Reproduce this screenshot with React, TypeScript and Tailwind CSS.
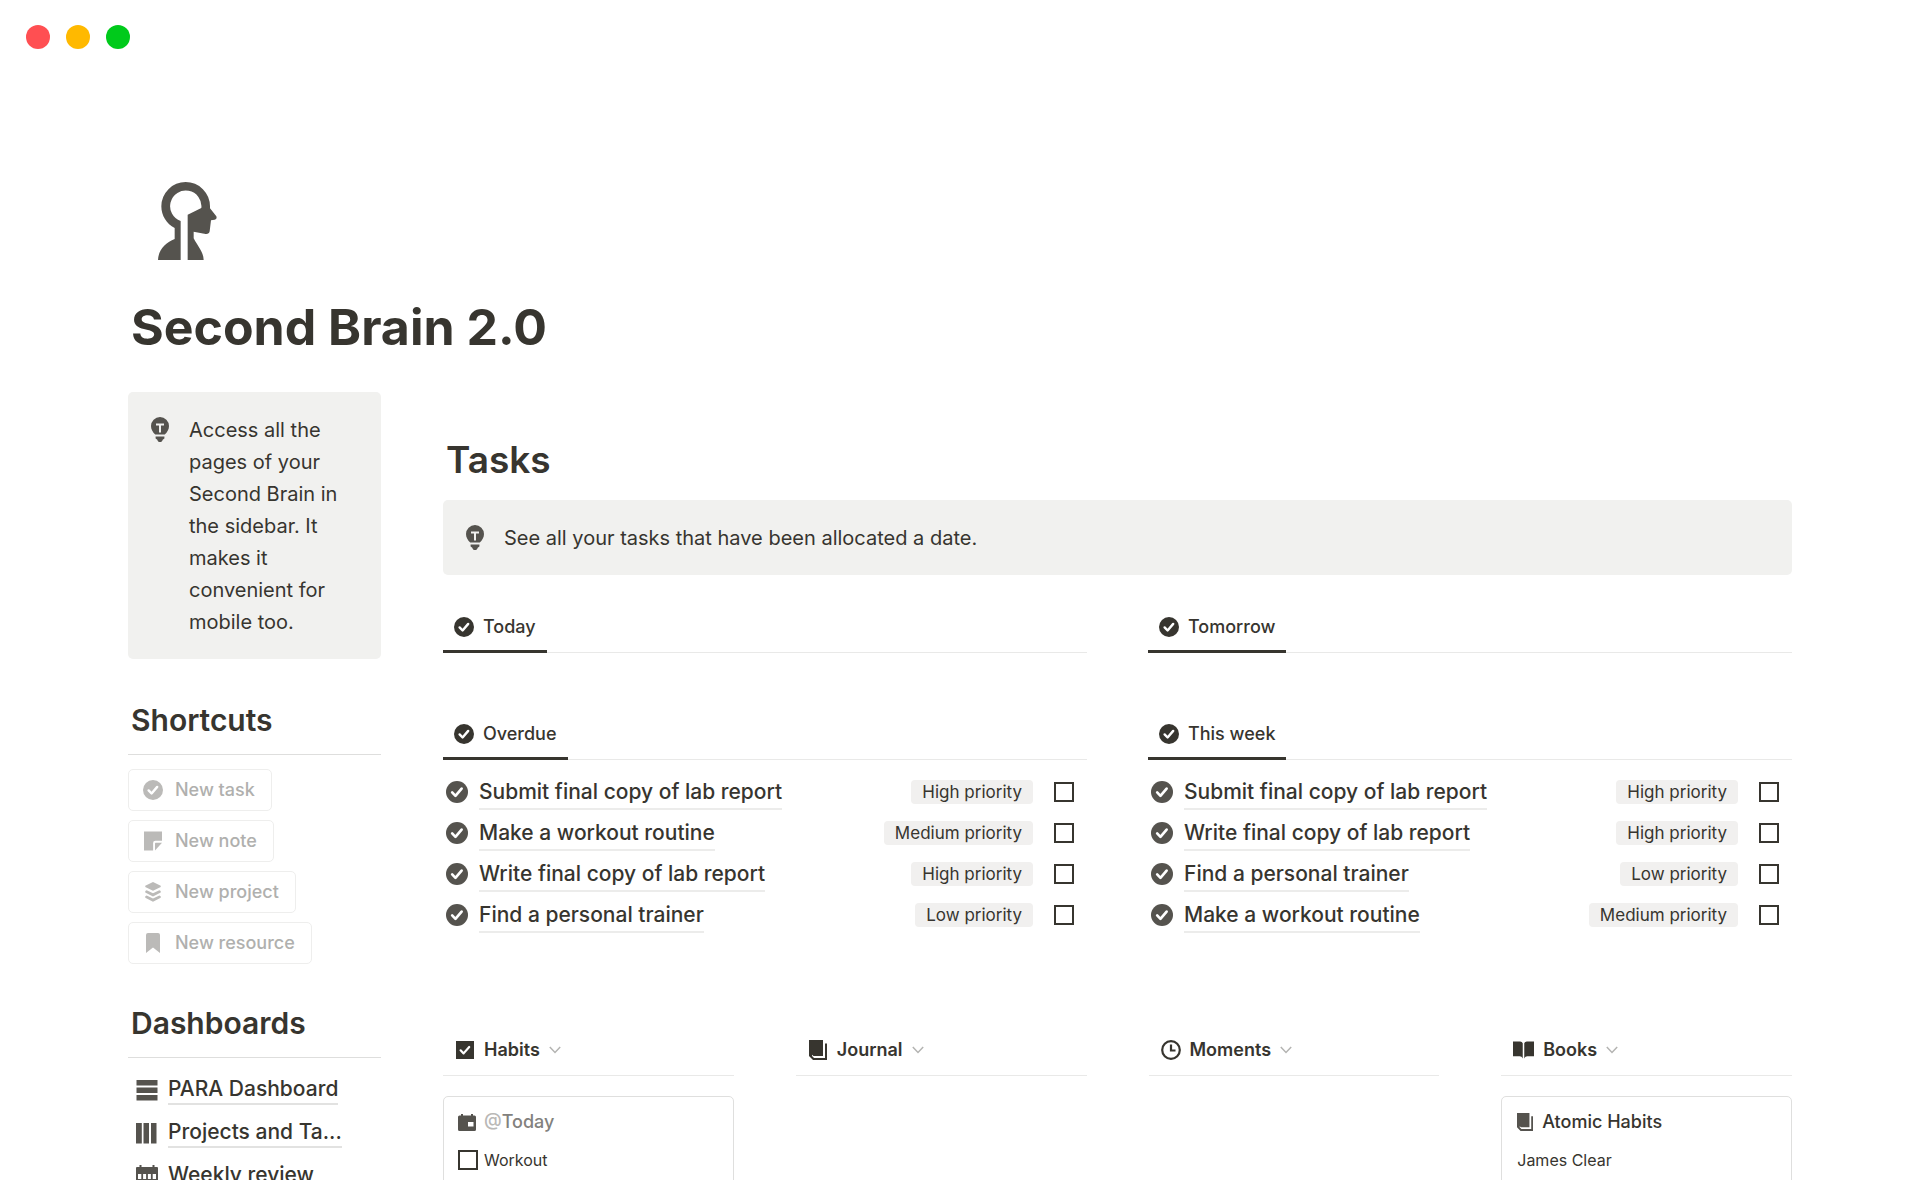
import React from 'react';

type IconProps = { className?: string };

const CheckCircle = ({ className }: IconProps) => (
  <svg viewBox="0 0 20 20" className={className} fill="currentColor" aria-hidden="true">
    <circle cx="10" cy="10" r="10" />
    <path d="M5.6 10.4l3 3.1 5.6-6.6" fill="none" stroke="#fff" strokeWidth="2.4" strokeLinecap="round" strokeLinejoin="round" />
  </svg>
);

const CheckSquare = ({ className }: IconProps) => (
  <svg viewBox="0 0 20 20" className={className} fill="currentColor" aria-hidden="true">
    <path d="M1 1h18v18H1z" />
    <path d="M5.6 10.3l3 3.1 5.6-6.4" fill="none" stroke="#fff" strokeWidth="2.2" strokeLinecap="round" strokeLinejoin="round" />
  </svg>
);

const Head = ({ className }: IconProps) => (
  <svg viewBox="54 36 177 234" className={className} fill="currentColor" aria-hidden="true">
    <path d="M54 270C55 238 78 217 104 207V174C80 162 64 137 64 109A73 73 0 0 1 210 109V115L229 139Q232 147 224 149L213 151L209 184Q207 193 197 192L161 185V205C175 232 190 245 191 270H143V134L184 114A47 47 0 1 0 122 153V270Z" />
  </svg>
);

const Bulb = ({ className }: IconProps) => (
  <svg viewBox="0 0 18 25" className={className} aria-hidden="true">
    <path fill="currentColor" d="M9 0a9 9 0 0 1 9 9c0 3.4-1.7 6-4.2 8.6H4.2C1.7 15 0 12.400 0 9a9 9 0 0 1 9-9zM4.600 19.500h8.800v1.900l-1.700 1.300c-.4 1.500-1.200 2.300-2.700 2.300s-2.300-.8-2.700-2.300l-1.700-1.300z" />
    <path fill="none" stroke="#f1f1ef" strokeWidth="2" d="M5 7.500h8M9 7.500v8" />
  </svg>
);

const Note = ({ className }: IconProps) => (
  <svg viewBox="0 0 20 20" className={className} fill="currentColor" aria-hidden="true">
    <path d="M1 .5h18v9.300h-6.600a2.300 2.300 0 0 0-2.300 2.300v7.400H1z" />
    <path d="M12 19.500v-6.700c0-.6.400-1 1-1h6z" />
  </svg>
);

const Layers = ({ className }: IconProps) => (
  <svg viewBox="0 0 20 22" className={className} fill="currentColor" aria-hidden="true">
    <path d="M10 0l8.500 4.200v1.200L10 9.600 1.500 5.400V4.200z" />
    <path d="M3 9l7 3.300L17 9l1.500 1v1.600L10 15.900l-8.500-4.300V10z" />
    <path d="M3 14.800l7 3.400 7-3.400 1.500 1v1.600L10 21.700l-8.500-4.300v-1.600z" />
  </svg>
);

const Bookmark = ({ className }: IconProps) => (
  <svg viewBox="0 0 20 20" className={className} fill="currentColor" aria-hidden="true">
    <path d="M5 0h10a2 2 0 0 1 2 2v18l-7-5.600L3 20V2a2 2 0 0 1 2-2z" />
  </svg>
);

const Rows = ({ className }: IconProps) => (
  <svg viewBox="0 0 22 22" className={className} fill="currentColor" aria-hidden="true">
    <path d="M.5 1h21v5.500H.5zM.5 8.500h21V14H.5zM.5 16h21v5.500H.5z" />
  </svg>
);

const Columns = ({ className }: IconProps) => (
  <svg viewBox="0 0 22 22" className={className} fill="currentColor" aria-hidden="true">
    <path d="M0 1h5.800v20.500H0zM7.500 1h5.500v20.500H7.500zM15 1h5.500v20.500H15z" />
  </svg>
);

const CalendarGrid = ({ className }: IconProps) => (
  <svg viewBox="0 0 22 22" className={className} fill="currentColor" aria-hidden="true">
    <path fillRule="evenodd" d="M3.500 0h2v2h11V0h2v2H21a1 1 0 0 1 1 1v19H0V3a1 1 0 0 1 1-1h2.500zM2 9v5h3.300V9zM7.100 9v5h3V9zM11.900 9v5h3V9zM16.700 9v5H20V9zM2 16v4h3.300v-4zM7.100 16v4h3v-4zM11.900 16v4h3v-4z" />
  </svg>
);

const CalendarDay = ({ className }: IconProps) => (
  <svg viewBox="0 0 18 17" className={className} fill="currentColor" aria-hidden="true">
    <path fillRule="evenodd" d="M3 0h2v1.500h8V0h2v1.500h1.500A1.500 1.500 0 0 1 18 3v12.500a1.500 1.500 0 0 1-1.500 1.500h-15A1.500 1.500 0 0 1 0 15.500V3a1.500 1.500 0 0 1 1.500-1.500H3zM10 8v4.500h5.500V8z" />
  </svg>
);

const Journal = ({ className }: IconProps) => (
  <svg viewBox="0 0 18 20" className={className} fill="currentColor" aria-hidden="true">
    <path d="M0 0h14v16H4.500L3 14.800V16l2 1.900h11V3.500h2V20H4L0 16z" />
  </svg>
);

const Clock = ({ className }: IconProps) => (
  <svg viewBox="0 0 20 20" className={className} fill="none" stroke="currentColor" strokeWidth="2.200" aria-hidden="true">
    <circle cx="10" cy="10" r="8.800" />
    <path d="M10 4.500v6h4.500" />
  </svg>
);

const OpenBook = ({ className }: IconProps) => (
  <svg viewBox="0 0 22 18" className={className} fill="currentColor" aria-hidden="true">
    <path d="M0 0h7.500a3 3 0 0 1 2.700 2v16c-.8-1.600-1.700-2.500-3.200-2.500H0zM22 0h-7.500a3 3 0 0 0-2.700 2v16c.8-1.600 1.700-2.500 3.200-2.500h7z" />
  </svg>
);

const Chevron = ({ className }: IconProps) => (
  <svg viewBox="0 0 12 8" className={className} fill="none" stroke="currentColor" strokeWidth="1.500" aria-hidden="true">
    <path d="M.8 1L6 6.500 11.200 1" />
  </svg>
);

const shortcuts = [
  { label: 'New task', Icon: CheckCircle },
  { label: 'New note', Icon: Note },
  { label: 'New project', Icon: Layers },
  { label: 'New resource', Icon: Bookmark },
];

const dashboards = [
  { label: 'PARA Dashboard', Icon: Rows },
  { label: 'Projects and Ta...', Icon: Columns },
  { label: 'Weekly review', Icon: CalendarGrid },
];

const overdue = [
  { name: 'Submit final copy of lab report', priority: 'High priority' },
  { name: 'Make a workout routine', priority: 'Medium priority' },
  { name: 'Write final copy of lab report', priority: 'High priority' },
  { name: 'Find a personal trainer', priority: 'Low priority' },
];

const thisWeek = [
  { name: 'Submit final copy of lab report', priority: 'High priority' },
  { name: 'Write final copy of lab report', priority: 'High priority' },
  { name: 'Find a personal trainer', priority: 'Low priority' },
  { name: 'Make a workout routine', priority: 'Medium priority' },
];

const checkbox = 'size-5 shrink-0 appearance-none border-2 border-[#37352f] bg-white checked:bg-[#37352f]';

function Callout({ children }: { children: React.ReactNode }) {
  return (
    <div className="flex gap-5 rounded-[5px] bg-[#f1f1ef] px-[23px] pt-[22px] pb-[21px] text-xl/8">
      <Bulb className="mt-[3px] h-[25px] w-[18px] shrink-0 text-[#55534e]" />
      <p>{children}</p>
    </div>
  );
}

function TabBar({ label }: { label: string }) {
  return (
    <div className="flex h-[52px] border-b border-[#e9e9e8]">
      <button className="-mb-px flex items-center gap-[9px] border-b-3 border-[#37352f] px-[11px] pt-0.5 text-lg font-medium">
        <CheckCircle className="size-5" />
        {label}
      </button>
    </div>
  );
}

function TaskList({ label, tasks }: { label: string; tasks: { name: string; priority: string }[] }) {
  return (
    <section>
      <TabBar label={label} />
      <ul className="mt-[11px]">
        {tasks.map((task) => (
          <li key={task.name} className="flex h-[41px] items-center pr-[13px] pl-[3px]">
            <CheckCircle className="size-[22px] text-[#55534e]" />
            <a href="#" className="mt-0.5 ml-[11px] border-b-2 border-[#ececeb] text-[21px]/8 font-medium">
              {task.name}
            </a>
            <span className="ml-auto rounded-sm bg-[#f1f0ef] px-[11px] text-[17px]/6">{task.priority}</span>
            <input type="checkbox" aria-label={task.name} className={`ml-[21px] ${checkbox}`} />
          </li>
        ))}
      </ul>
    </section>
  );
}

interface BoardProps {
  label: string;
  icon: React.ReactNode;
  children?: React.ReactNode;
}

function Board({ label, icon, children }: BoardProps) {
  return (
    <section>
      <div className="flex h-[52px] items-center border-b border-[#e9e9e8] pl-3">
        <button className="flex items-center gap-[9px] text-lg font-semibold">
          {icon}
          {label}
          <Chevron className="h-2 w-3 text-[#b4b4b2]" />
        </button>
      </div>
      {children}
    </section>
  );
}

export default function App() {
  return (
    <div className="flex h-screen flex-col bg-white pb-5 font-['Inter','Liberation_Sans',sans-serif] text-[#37352f]">
      <div className="min-h-0 flex-1 overflow-hidden">
        {/* Window controls */}
        <div className="flex gap-4 px-[26px] pt-[25px]">
          <span className="size-6 rounded-full bg-[#ff4f52]" />
          <span className="size-6 rounded-full bg-[#ffb900]" />
          <span className="size-6 rounded-full bg-[#00ca1b]" />
        </div>

        {/* Page header */}
        <header className="px-32 pt-[133px]">
          <Head className="ml-[30px] h-[78px] w-[59px] text-[#55534e]" />
          <h1 className="mt-9 pl-[3px] text-[50px]/[62px] font-bold">Second Brain 2.0</h1>
        </header>

        <div className="flex gap-[62px] px-32 pt-[34px]">
          {/* Sidebar */}
          <aside className="w-[253px] shrink-0">
            <Callout>
              Access all the pages of your Second Brain in the sidebar. It makes it convenient for mobile too.
            </Callout>

            <h2 className="mt-[41px] pl-[3px] text-3xl/10 font-semibold">Shortcuts</h2>
            <hr className="mt-3.5 border-[#dededd]" />
            <div className="mt-3.5 flex flex-col items-start gap-[9px]">
              {shortcuts.map(({ label, Icon }) => (
                <button
                  key={label}
                  className="flex h-[42px] items-center gap-3 rounded-[5px] border border-[#eeeeed] pr-4 pl-3.5 text-lg font-medium text-[#b0b0ae]"
                >
                  <Icon className="size-5 text-[#bbbab8]" />
                  {label}
                </button>
              ))}
            </div>

            <h2 className="mt-[39px] pl-[3px] text-3xl/10 font-semibold">Dashboards</h2>
            <hr className="mt-3.5 border-[#dededd]" />
            <nav className="mt-2.5">
              {dashboards.map(({ label, Icon }) => (
                <div key={label} className="flex h-[43px] items-center gap-2.5 pl-2">
                  <Icon className="size-[22px] shrink-0 text-[#55534e]" />
                  <a href="#" className="border-b-2 border-[#e2e2e1] text-[21px]/7 font-medium whitespace-nowrap">
                    {label}
                  </a>
                </div>
              ))}
            </nav>
          </aside>

          {/* Main column */}
          <main className="min-w-0 flex-1 pt-11">
            <h2 className="pl-[3px] text-[37px]/12 font-semibold">Tasks</h2>
            <div className="mt-4">
              <Callout>See all your tasks that have been allocated a date.</Callout>
            </div>

            <div className="mt-[26px] grid grid-cols-2 gap-x-[61px] gap-y-[55px]">
              <TabBar label="Today" />
              <TabBar label="Tomorrow" />
              <TaskList label="Overdue" tasks={overdue} />
              <TaskList label="This week" tasks={thisWeek} />
            </div>

            <div className="mt-[89px] grid grid-cols-4 gap-x-[62px]">
              <Board label="Habits" icon={<CheckSquare className="size-5" />}>
                <div className="mt-5 h-60 rounded-[5px] border border-[#dfdfde] px-3.5 pt-[11px]">
                  <div className="flex items-center gap-2 text-lg/7 font-medium">
                    <CalendarDay className="h-[17px] w-[18px] text-[#55534e]" />
                    <span className="text-[#82817d]">
                      <span className="text-[#b9b8b6]">@</span>Today
                    </span>
                  </div>
                  <label className="mt-3 flex items-center gap-1.5 text-base/6">
                    <input type="checkbox" className={checkbox} />
                    Workout
                  </label>
                </div>
              </Board>
              <Board label="Journal" icon={<Journal className="size-5" />} />
              <Board label="Moments" icon={<Clock className="size-5" />} />
              <Board label="Books" icon={<OpenBook className="h-[18px] w-[21px]" />}>
                <div className="mt-5 h-60 rounded-[5px] border border-[#dfdfde] px-[15px] pt-[11px]">
                  <div className="flex items-center gap-[9px] text-lg/7 font-medium">
                    <Journal className="h-[18px] w-4 text-[#55534e]" />
                    Atomic Habits
                  </div>
                  <p className="mt-3 text-base/6">James Clear</p>
                </div>
              </Board>
            </div>
          </main>
        </div>
      </div>
    </div>
  );
}
